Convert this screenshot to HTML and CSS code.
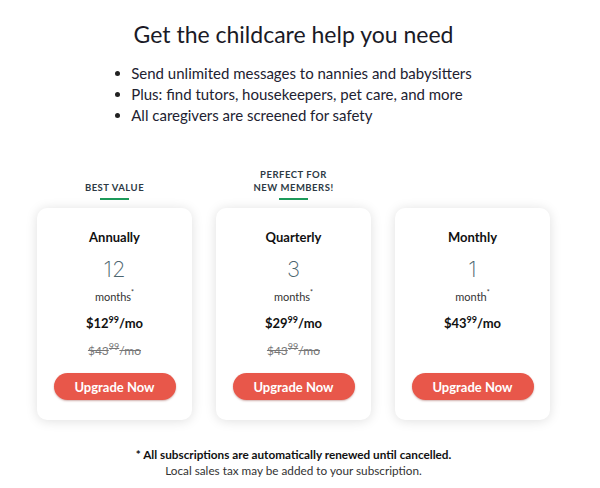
FILE: index.html
```html
<!DOCTYPE html>
<html lang="en">
<head>
<meta charset="utf-8">
<title>Upgrade</title>
<link rel="stylesheet" href="styles.css">
</head>
<body>
<div class="page">
  <h1 class="title">Get the childcare help you need</h1>
  <ul class="perks">
    <li>Send unlimited messages to nannies and babysitters</li>
    <li>Plus: find tutors, housekeepers, pet care, and more</li>
    <li>All caregivers are screened for safety</li>
  </ul>

  <div class="plans">
    <div class="plan">
      <div class="tag"><span>BEST VALUE</span><i class="bar"></i></div>
      <div class="card">
        <div class="name">Annually</div>
        <div class="count">12</div>
        <div class="unit">months<sup>*</sup></div>
        <div class="price">$12<sup>99</sup>/mo</div>
        <div class="was">$43<sup>99</sup>/mo</div>
        <button class="cta">Upgrade Now</button>
      </div>
    </div>
    <div class="plan">
      <div class="tag"><span>PERFECT FOR<br>NEW MEMBERS!</span><i class="bar"></i></div>
      <div class="card">
        <div class="name">Quarterly</div>
        <div class="count">3</div>
        <div class="unit">months<sup>*</sup></div>
        <div class="price">$29<sup>99</sup>/mo</div>
        <div class="was">$43<sup>99</sup>/mo</div>
        <button class="cta">Upgrade Now</button>
      </div>
    </div>
    <div class="plan">
      <div class="tag"></div>
      <div class="card">
        <div class="name">Monthly</div>
        <div class="count">1</div>
        <div class="unit">month<sup>*</sup></div>
        <div class="price">$43<sup>99</sup>/mo</div>
        <button class="cta">Upgrade Now</button>
      </div>
    </div>
  </div>

  <div class="notes">
    <p class="renew">* All subscriptions are automatically renewed until cancelled.</p>
    <p class="tax">Local sales tax may be added to your subscription.</p>
  </div>
</div>
</body>
</html>
```

FILE: styles.css
```css
* { box-sizing: border-box; }
html, body { margin: 0; background: #fff; }
body {
  font-family: Lato, "Open Sans", "Liberation Sans", sans-serif;
  color: #1c1b2b;
}
.page {
  width: 587px;
  padding-top: 21px;
}
.title {
  margin: 0;
  text-align: center;
  font-size: 23px;
  line-height: 26px;
  font-weight: 400;
  color: #1a1a26;
}
.perks {
  list-style: none;
  margin: 16px auto 0;
  padding: 0;
  width: fit-content;
}
.perks li {
  position: relative;
  padding-left: 16px;
  font-size: 15px;
  line-height: 21px;
  color: #222231;
}
.perks li::before {
  content: "";
  position: absolute;
  left: 0;
  top: 8px;
  width: 5px;
  height: 5px;
  border-radius: 50%;
  background: #222;
}
.plans {
  display: flex;
  justify-content: center;
  gap: 24px;
  margin-top: 42px;
}
.plan {
  width: 155px;
  display: flex;
  flex-direction: column;
}
.tag {
  height: 32px;
  display: flex;
  flex-direction: column;
  align-items: center;
  justify-content: flex-end;
  text-align: center;
  font-size: 9.5px;
  line-height: 13px;
  font-weight: 700;
  letter-spacing: 0.5px;
  color: #2d3a45;
}
.tag span { margin-bottom: 4px; }
.bar {
  display: block;
  width: 29px;
  height: 2px;
  background: #1d9a5b;
}
.card {
  flex: 1;
  margin-top: 8px;
  background: #fff;
  border-radius: 10px;
  box-shadow: 0 1px 12px rgba(0, 0, 0, 0.13);
  padding: 21px 0 20px;
  display: flex;
  flex-direction: column;
  align-items: center;
  text-align: center;
}
.name {
  font-size: 13px;
  line-height: 16px;
  font-weight: 700;
  color: #111;
}
.count {
  margin-top: 11px;
  font-family: Inter, Roboto, sans-serif;
  font-size: 22px;
  line-height: 26px;
  font-weight: 200;
  color: #4d6670;
}
.unit {
  margin-top: 8px;
  font-size: 11px;
  line-height: 14px;
  color: #333;
}
.unit sup {
  font-size: 7px;
  vertical-align: 6px;
  line-height: 0;
}
.price {
  margin-top: 10px;
  font-size: 13px;
  line-height: 18px;
  font-weight: 700;
  color: #111;
}
.price sup, .was sup {
  font-size: 9px;
  line-height: 0;
  vertical-align: 5px;
}
.was {
  margin-top: 11px;
  margin-bottom: 14px;
  font-size: 12px;
  line-height: 16px;
  color: #777;
  text-decoration: line-through;
}
.cta {
  margin-top: auto;
  width: 122px;
  height: 27px;
  border: 0;
  border-radius: 14px;
  background: #e8574a;
  color: #fff;
  font-family: inherit;
  font-size: 13px;
  font-weight: 700;
  box-shadow: 0 1px 2px rgba(120, 30, 20, 0.35);
  cursor: pointer;
}
.notes {
  margin-top: 27px;
  text-align: center;
  font-size: 11.75px;
  line-height: 16px;
}
.notes p { margin: 0; }
.renew { font-weight: 700; color: #111; }
.tax { color: #333; }
```
